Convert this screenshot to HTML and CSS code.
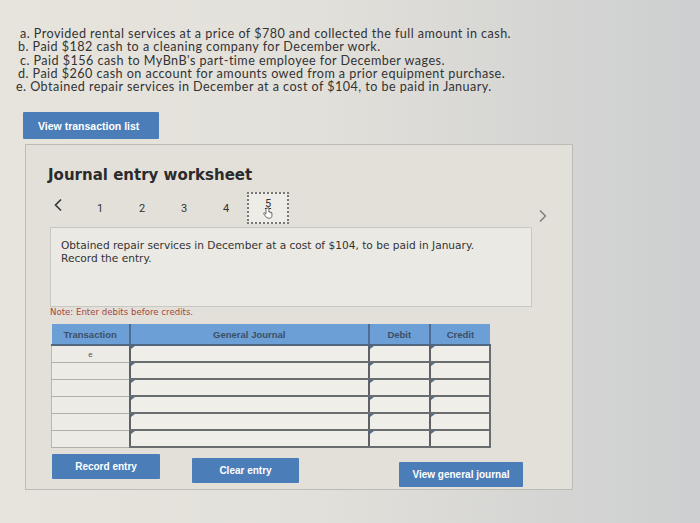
FILE: index.html
```html
<!DOCTYPE html>
<html>
<head>
<meta charset="utf-8">
<link rel="stylesheet" href="styles.css">
</head>
<body>
<div class="intro">
  <p class="l1">a. Provided rental services at a price of $780 and collected the full amount in cash.</p>
  <p class="l2">b. Paid $182 cash to a cleaning company for December work.</p>
  <p class="l3">c. Paid $156 cash to MyBnB's part-time employee for December wages.</p>
  <p class="l4">d. Paid $260 cash on account for amounts owed from a prior equipment purchase.</p>
  <p class="l5">e. Obtained repair services in December at a cost of $104, to be paid in January.</p>
</div>
<button class="btn btn-list">View transaction list</button>
<div class="panel">
  <h2 class="title">Journal entry worksheet</h2>
  <div class="nav">
    <span class="nav-item arrow">
      <svg width="10" height="14" viewBox="0 0 10 14"><path d="M8 1.5 L2.5 7 L8 12.5" fill="none" stroke="#333" stroke-width="1.6"/></svg>
    </span>
    <span class="nav-item">1</span>
    <span class="nav-item">2</span>
    <span class="nav-item">3</span>
    <span class="nav-item">4</span>
    <span class="nav-item current"><span class="num5">5</span>
      <svg class="hand" width="12" height="12" viewBox="0 0 12 12"><path d="M4 1.2 v6 l-1.3-1.3 c-0.6-0.5-1.4 0.2-0.9 0.9 l2.4 3.4 c0.4 0.6 1 0.9 1.7 0.9 h2 c1.2 0 2-0.9 2-2 v-3 c0-0.6-1-0.6-1 0 v-0.6 c0-0.6-1-0.6-1 0 v-0.4 c0-0.6-1-0.6-1 0 v-3.9 c0-0.7-1.3-0.7-1.3 0 z" fill="#fff" stroke="#333" stroke-width="0.7"/></svg>
    </span>
    <span class="nav-next">
      <svg width="10" height="14" viewBox="0 0 10 14"><path d="M2 1.5 L7.5 7 L2 12.5" fill="none" stroke="#777" stroke-width="1.3"/></svg>
    </span>
  </div>
  <div class="desc">
    <p>Obtained repair services in December at a cost of $104, to be paid in January.</p>
    <p>Record the entry.</p>
  </div>
  <p class="note">Note: Enter debits before credits.</p>
  <table class="journal">
    <thead>
      <tr><th class="c-tr">Transaction</th><th class="c-gj">General Journal</th><th class="c-dr">Debit</th><th class="c-cr">Credit</th></tr>
    </thead>
    <tbody>
      <tr><td class="tr">e</td><td class="in"></td><td class="in"></td><td class="in"></td></tr>
      <tr><td class="tr"></td><td class="in"></td><td class="in"></td><td class="in"></td></tr>
      <tr><td class="tr"></td><td class="in"></td><td class="in"></td><td class="in"></td></tr>
      <tr><td class="tr"></td><td class="in"></td><td class="in"></td><td class="in"></td></tr>
      <tr><td class="tr"></td><td class="in"></td><td class="in"></td><td class="in"></td></tr>
      <tr><td class="tr"></td><td class="in"></td><td class="in"></td><td class="in"></td></tr>
    </tbody>
  </table>
  <div class="actions">
    <button class="btn btn-record">Record entry</button>
    <button class="btn btn-clear">Clear entry</button>
    <button class="btn btn-view">View general journal</button>
  </div>
</div>
</body>
</html>
```
FILE: styles.css
```css
html, body {
  margin: 0;
  padding: 0;
}
body {
  width: 700px;
  height: 523px;
  overflow: hidden;
  background: linear-gradient(90deg, #e7e4dd 0%, #e2e0da 45%, #d6d6d4 75%, #cdcfd0 100%);
  font-family: "Liberation Sans", Arial, sans-serif;
  color: #2e2e2e;
}
.intro {
  padding-top: 27px;
  padding-left: 18px;
}
.intro p {
  margin: 0;
  font-family: Lato, "Open Sans", sans-serif;
  font-size: 12.6px;
  letter-spacing: 0.45px;
  line-height: 13.3px;
  color: #333;
}
.intro .l1 { padding-left: 2px; }
.intro .l3 { padding-left: 2px; }
.intro .l5 { margin-left: -2px; }
.btn {
  display: block;
  border: none;
  background: #4b7db9;
  color: #fff;
  font-family: "Liberation Sans", Arial, sans-serif;
  font-weight: bold;
  font-size: 10px;
  padding: 0;
  border-radius: 1px;
}
.btn-list {
  margin: 19px 0 0 23px;
  width: 136px;
  height: 27px;
  font-size: 10.5px;
  text-align: left;
  padding-left: 15px;
}
.panel {
  margin: 5px 0 0 25px;
  width: 548px;
  height: 346px;
  box-sizing: border-box;
  border: 1px solid #bdbbb5;
  background: #e3e0d9;
  padding-top: 21px;
}
.title {
  margin: 0 0 0 22px;
  font-family: "DejaVu Sans", Verdana, sans-serif;
  font-weight: bold;
  font-size: 15px;
  line-height: 18px;
  color: #2b2b2b;
}
.nav {
  display: flex;
  align-items: center;
  margin: 8px 0 0 11px;
  height: 32px;
  font-family: Roboto, Arial, sans-serif;
  font-size: 11px;
  color: #333;
}
.nav-item {
  width: 42px;
  height: 32px;
  box-sizing: border-box;
  display: flex;
  align-items: center;
  justify-content: center;
}
.nav-item.arrow {
  padding-bottom: 6px;
}
.nav-item.current {
  position: relative;
  border: 2px dotted #777;
  background: #eeece7;
  flex-direction: column;
  line-height: 10px;
  padding-top: 2px;
}
.num5 {
  text-decoration: underline;
  font-size: 11px;
}
.hand {
  margin-top: -2px;
}
.nav-next {
  margin-left: auto;
  margin-right: 24px;
  padding-top: 18px;
}
.desc {
  margin: 3px 0 0 24px;
  width: 482px;
  height: 80px;
  box-sizing: border-box;
  border: 1px solid #c9c7c1;
  background: #ebe9e3;
  padding: 11px 10px;
}
.desc p {
  margin: 0;
  font-family: "DejaVu Sans", Verdana, sans-serif;
  font-size: 10.6px;
  line-height: 13px;
  color: #333;
}
.note {
  margin: 0 0 0 24px;
  font-family: "DejaVu Sans", Verdana, sans-serif;
  font-size: 8.6px;
  line-height: 10px;
  color: #a5463c;
}
.journal {
  margin: 7px 0 0 25px;
  border-collapse: collapse;
  width: 440px;
  font-family: "Liberation Sans", Arial, sans-serif;
}
.journal th {
  background: #6b9fd6;
  color: #3d4f67;
  font-size: 9.5px;
  font-weight: bold;
  height: 20px;
  padding: 0;
  border-left: 2px solid #4f6f92;
  border-bottom: 2px solid #51677f;
}
.journal th:first-child { border-left: none; }
.c-tr { width: 78px; }
.c-gj { width: 242px; }
.c-dr { width: 60px; }
.c-cr { width: 60px; }
.journal td {
  height: 15px;
  padding: 0;
  background: #ecebe6;
}
.journal td.tr {
  text-align: center;
  font-size: 8px;
  color: #555;
  border-bottom: 1px solid #b0afaa;
  border-left: 1px solid #bab8b2;
}
.journal td.in {
  position: relative;
  border-left: 2px solid #5e6266;
  border-bottom: 2px solid #6a6d70;
  background: #efeee9;
}
.journal td.in:last-child {
  border-right: 2px solid #6a6d70;
}
.journal td.in::before {
  content: "";
  position: absolute;
  left: 0;
  top: 0;
  border-top: 3px solid #4f6f92;
  border-right: 4px solid transparent;
}
.actions {
  display: flex;
  align-items: flex-start;
  margin: 6px 0 0 26px;
}
.btn-record {
  width: 108px;
  height: 25px;
}
.btn-clear {
  width: 107px;
  height: 25px;
  margin-left: 32px;
  margin-top: 4px;
}
.btn-view {
  width: 124px;
  height: 25px;
  margin-left: 100px;
  margin-top: 8px;
}
```
